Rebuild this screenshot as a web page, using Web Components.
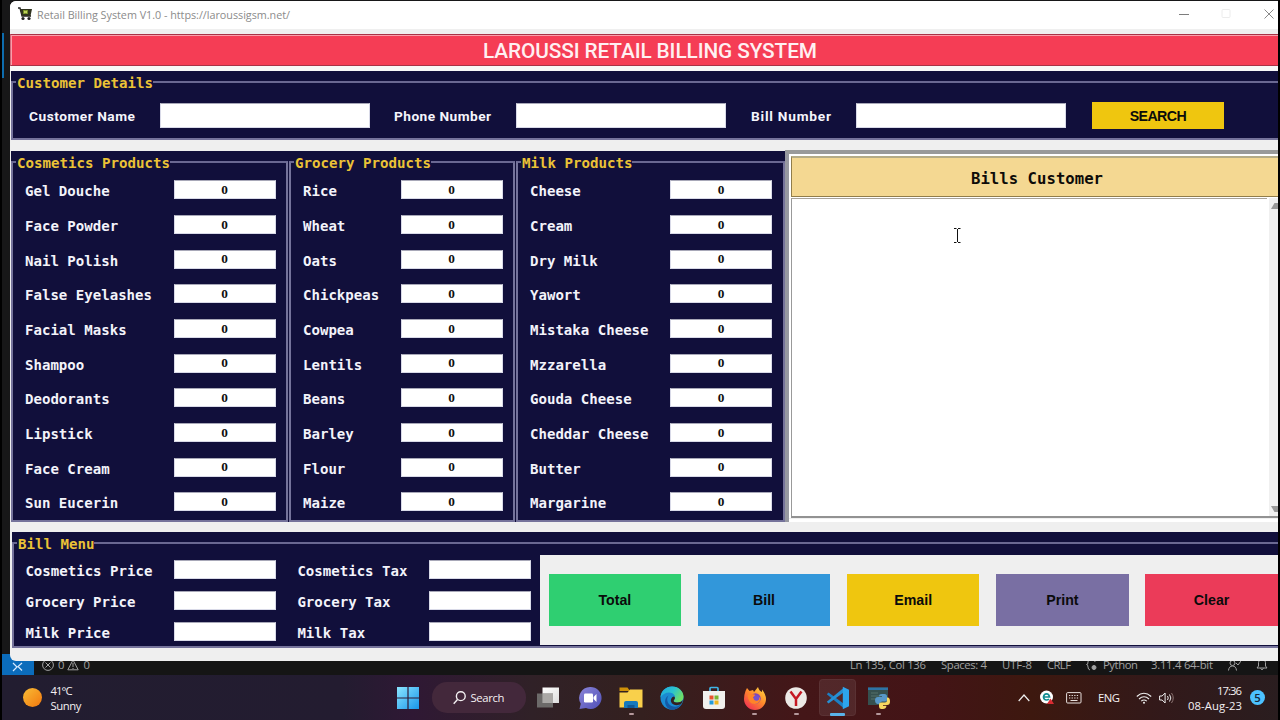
<!DOCTYPE html>
<html lang="en">
<head>
<meta charset="utf-8">
<title>Retail Billing System V1.0</title>
<style>
body {
    margin: 0;
    width: 1280px;
    height: 720px;
    overflow: hidden;
    background: #000;
}
</style>
</head>
<body>
<desktop-screen></desktop-screen>

<script>
// Text spread over a fixed width by its letter spacing
class FitText extends HTMLElement {
    connectedCallback() {
        const root = this.attachShadow({ mode: 'open' });
        root.innerHTML = `
<style>
:host { display: block; flex: none; white-space: nowrap; }
span { display: inline-block; }
</style>
<span><slot></slot></span>`;
        const span = root.querySelector('span');
        const width = Number(this.getAttribute('width'));
        this.style.width = width + 'px';
        const natural = span.getBoundingClientRect().width;
        const count = this.textContent.length;
        span.style.letterSpacing = (width - natural) / (count - 1) + 'px';
    }
}

class EntryBox extends HTMLElement {
    connectedCallback() {
        this.attachShadow({ mode: 'open' }).innerHTML = `
<style>
:host {
    display: flex;
    flex: none;
    box-sizing: border-box;
    width: 102px;
    height: 19px;
    align-items: center;
    justify-content: center;
    background: #fff;
    border: 1px solid #d9dae8;
    border-top-color: #a8a8b8;
    color: #101010;
    font: bold 13.3px "Liberation Serif", serif;
}
</style>
<slot></slot>`;
    }
}

class FlatButton extends HTMLElement {
    connectedCallback() {
        this.attachShadow({ mode: 'open' }).innerHTML = `
<style>
:host {
    display: flex;
    flex: none;
    align-items: center;
    justify-content: center;
    width: 132.3px;
    height: 52px;
    color: #0b0b0b;
    font: bold 14.2px "Liberation Sans", sans-serif;
}
</style>
<slot></slot>`;
    }
}

class LabelFrame extends HTMLElement {
    connectedCallback() {
        this.attachShadow({ mode: 'open' }).innerHTML = `
<style>
:host {
    display: flex;
    flex: none;
    box-sizing: border-box;
    background: #110f3b;
}
fieldset {
    flex: 1;
    box-sizing: border-box;
    min-width: 0;
    margin: 0;
    padding: 0;
    border: 2px solid #75739b;
    border-top-color: #6a6892;
}
legend {
    margin-left: 3px;
    padding: 0 0 0 1px;
    height: 22px;
    color: #ebc236;
    font: bold 14.12px/24px "DejaVu Sans Mono", monospace;
}
</style>
<fieldset><legend>${this.getAttribute('caption')}</legend><slot></slot></fieldset>`;
    }
}

class ProductList extends HTMLElement {
    connectedCallback() {
        const rows = this.getAttribute('items').split(',').map(name =>
            `<div class="row"><span>${name}</span><entry-box>0</entry-box></div>`).join('');
        this.attachShadow({ mode: 'open' }).innerHTML = `
<style>
:host {
    display: grid;
    grid-auto-rows: 34.67px;
    padding: 0 10.5px 0 12px;
}
.row { display: flex; align-items: center; justify-content: space-between; }
span {
    color: #f3f3fa;
    font: bold 14.07px/20px "DejaVu Sans Mono", monospace;
    margin-top: 3px;
    white-space: nowrap;
}
</style>
${rows}`;
    }
}

class TitleBar extends HTMLElement {
    connectedCallback() {
        this.attachShadow({ mode: 'open' }).innerHTML = `
<style>
:host {
    display: flex;
    flex: none;
    align-items: center;
    box-sizing: border-box;
    height: 28px;
    padding: 0 0 2px 8px;
    background: #fff;
    color: #8b8b8b;
    font: 10.8px "Open Sans", sans-serif;
}
.controls { margin: 0 4px 0 auto; display: flex; }
fit-text { margin-left: 5px; }
</style>
<svg width="14" height="14" viewBox="0 0 14 14"><path d="M0 1h2l2 8h9" fill="none" stroke="#222" stroke-width="1.3"/><path d="M2 2h12l-1.5 7H4z" fill="#30331f"/><path d="M5 3h5v4H5z" fill="#718c25"/><path d="m6 4 3 2m0-2L6 6" stroke="#d5e36a"/><circle cx="5" cy="11.5" r="1.6" fill="#222"/><circle cx="11" cy="11.5" r="1.6" fill="#222"/></svg>
<fit-text width="253">Retail Billing System V1.0 - https://laroussigsm.net/</fit-text>
<svg class="controls" width="96" height="12" viewBox="0 0 96 12" fill="none"><path d="M1 6.5h10" stroke="#7d7d7d"/><rect x="44" y="1.5" width="8" height="8" rx="1" stroke="#ececec"/><path d="m86.500 1.500 9 9m0-9-9 9" stroke="#8a8a8a"/></svg>`;
    }
}

class BillsPanel extends HTMLElement {
    connectedCallback() {
        this.attachShadow({ mode: 'open' }).innerHTML = `
<style>
:host {
    display: flex;
    flex: none;
    flex-direction: column;
    box-sizing: border-box;
    width: 494px;
    height: 372px;
    margin-top: -1px;
    padding: 2px 0 0 2.5px;
    background: #fff;
    border-left: 4px solid #9799a1;
    border-top: 4px solid #999a9a;
}
h2 {
    box-sizing: border-box;
    height: 41px;
    margin: 0;
    border: 1px solid #917d4a;
    border-top: 2px solid #b5ac86;
    border-right: 0;
    background: #f4d892;
    color: #0d0b08;
    font: bold 15.6px/43px "DejaVu Sans Mono", monospace;
    padding-left: 179px;
}
.area { display: flex; flex: 1; margin-top: 1px; border-bottom: 2px solid #929292; }
.text { flex: 1; border-top: 1px solid #a8a39a; border-left: 1px solid #999; }
.scroll {
    display: flex;
    flex-direction: column;
    justify-content: space-between;
    width: 10px;
    margin-left: 2px;
    padding: 5px 0 4px;
    box-sizing: border-box;
    background: #f0f0f0;
}
svg { margin-left: 2px; }
footer { height: 4px; background: linear-gradient(#f0f0f0 1px, #fff 1px); margin-left: -2px; }
</style>
<h2><fit-text width="132">Bills Customer</fit-text></h2>
<div class="area">
    <div class="text"></div>
    <div class="scroll">
        <svg width="7" height="6"><path d="M0 6 3.500 0H7v6z" fill="#999"/></svg>
        <svg width="7" height="6"><path d="M0 0 3.500 6H7V0z" fill="#999"/></svg>
    </div>
</div>
<footer></footer>`;
    }
}

class BillMenu extends HTMLElement {
    connectedCallback() {
        const rows = ['Cosmetics', 'Grocery', 'Milk'].map(name =>
            `<span>${name} Price</span><entry-box></entry-box><span>${name} Tax</span><entry-box></entry-box>`).join('');
        this.attachShadow({ mode: 'open' }).innerHTML = `
<style>
:host { display: flex; }
.prices {
    display: grid;
    grid-template-columns: 148.500px 123.500px 131.500px 111.500px;
    grid-auto-rows: 31px;
    align-items: center;
    padding-left: 11.400px;
    width: 515.200px;
}
span {
    color: #f3f3fa;
    font: bold 14.07px/20px "DejaVu Sans Mono", monospace;
    margin-top: 2px;
    white-space: nowrap;
}
.buttons {
    display: flex;
    align-items: center;
    gap: 16.9px;
    box-sizing: border-box;
    width: 780px;
    height: 90px;
    margin-top: 1px;
    padding-left: 8.300px;
    background: #efefef;
}
</style>
<div class="prices">${rows}</div>
<div class="buttons">
    <flat-button style="background:#2fcf71">Total</flat-button>
    <flat-button style="background:#3297da">Bill</flat-button>
    <flat-button style="background:#efc60f">Email</flat-button>
    <flat-button style="background:#796fa3">Print</flat-button>
    <flat-button style="background:#eb3b59">Clear</flat-button>
</div>`;
    }
}

class BillingWindow extends HTMLElement {
    connectedCallback() {
        this.attachShadow({ mode: 'open' }).innerHTML = `
<style>
:host {
    display: flex;
    flex-direction: column;
    width: 1268px;
    height: 661px;
    overflow: hidden;
    border-radius: 6px 0 0 6px;
    background: #efefef;
}
h1 {
    display: flex;
    flex: none;
    align-items: center;
    box-sizing: border-box;
    height: 32px;
    margin: 5px 0;
    padding: 3px 0 0 472px;
    border: 1px solid #a83246;
    border-right: 0;
    border-left-color: #d06a7c;
    box-shadow: inset 1px 1px #f9a0ab, 0 5px #f8f8f8;
    background: #f53d55;
    color: #fff0f2;
    font: 500 20.800px/27px Roboto, sans-serif;
}
.customer { width: 1300px; height: 69px; margin-left: 1px; }
.fields {
    display: flex;
    align-items: center;
    margin-left: 16px;
    height: 27px;
    margin-top: 9px;
    color: #f5f5fb;
    font: bold 13.7px Roboto, sans-serif;
}
.fields entry-box { width: 210px; height: 25px; }
.products { display: flex; flex: none; height: 371px; margin: 11px 0 10px 1px; }
.menu { width: 1300px; height: 116px; margin-left: 2px; }
product-list { margin-top: -.4px; }
</style>
<title-bar></title-bar>
<h1><fit-text width="334">LAROUSSI RETAIL BILLING SYSTEM</fit-text></h1>
<label-frame class="customer" caption="Customer Details">
    <div class="fields">
        <fit-text width="106">Customer Name</fit-text>
        <entry-box style="margin:0 24.500px"></entry-box>
        <fit-text width="97">Phone Number</fit-text>
        <entry-box style="margin:0 25px"></entry-box>
        <fit-text width="80">Bill Number</fit-text>
        <entry-box style="margin:0 26px 0 25px"></entry-box>
        <flat-button style="background:#efc60f;height:26.500px"><fit-text width="57">SEARCH</fit-text></flat-button>
    </div>
</label-frame>
<div class="products">
    <label-frame style="width:277px" caption="Cosmetics Products">
        <product-list items="Gel Douche,Face Powder,Nail Polish,False Eyelashes,Facial Masks,Shampoo,Deodorants,Lipstick,Face Cream,Sun Eucerin"></product-list>
    </label-frame>
    <label-frame style="width:227px;padding-left:1px" caption="Grocery Products">
        <product-list items="Rice,Wheat,Oats,Chickpeas,Cowpea,Lentils,Beans,Barley,Flour,Maize"></product-list>
    </label-frame>
    <label-frame style="width:269.500px;padding-left:1px" caption="Milk Products">
        <product-list items="Cheese,Cream,Dry Milk,Yawort,Mistaka Cheese,Mzzarella,Gouda Cheese,Cheddar Cheese,Butter,Margarine"></product-list>
    </label-frame>
    <bills-panel></bills-panel>
</div>
<label-frame class="menu" caption="Bill Menu"><bill-menu></bill-menu></label-frame>`;
    }
}

class StatusBar extends HTMLElement {
    connectedCallback() {
        this.attachShadow({ mode: 'open' }).innerHTML = `
<style>
:host {
    display: flex;
    align-items: center;
    height: 21px;
    color: #a2a2a2;
    background: #151515;
    font: 11.3px/21px "Open Sans", sans-serif;
}
.remote { width: 32px; height: 21px; background: #0b6cbb; }
.right { display: flex; align-items: center; gap: 15px; margin-left: auto; margin-right: 10px; }
svg { fill: none; stroke: #a2a2a2; flex: none; }
</style>
<svg class="remote" viewBox="0 0 32 21" style="stroke:#d6eaff"><path d="m11 9 4 4-4 4m9-8-4 3.500 4 4" stroke-width="1.2"/></svg>
<svg width="12" height="12" style="margin:0 4px 0 8px"><circle cx="6" cy="6" r="5.4"/><path d="m3.500 3.500 5 5m0-5-5 5"/></svg>
<span>0</span>
<svg width="12" height="12" style="margin:0 4px 0 3px"><path d="M6 1 .8 10.800h10.400zM6 4v4m0 1v1"/></svg>
<span>0</span>
<div class="right">
    <fit-text width="76">Ln 135, Col 136</fit-text>
    <fit-text width="46">Spaces: 4</fit-text>
    <fit-text width="30">UTF-8</fit-text>
    <fit-text width="24">CRLF</fit-text>
    <svg width="11" height="13" style="margin-right:-9px"><path d="M4 1Q2 1 2 4T.5 6.500Q2 6.500 2 9t2 3M7 1q2 0 2 3"/><circle cx="8" cy="9.500" r="2" fill="#a2a2a2"/></svg>
    <fit-text width="35">Python</fit-text>
    <fit-text width="62" style="margin-left:-2px">3.11.4 64-bit</fit-text>
    <svg width="13" height="12"><circle cx="4.500" cy="4" r="2.500"/><path d="M.5 11.500Q1 7 4.500 7t4 4.500M8 4l2 2 3-4"/></svg>
    <svg width="12" height="13"><path d="M1 10h10L9.500 8V4.500a3.500 3.500 0 0 0-7 0V8zM4.500 10.500q1.500 2.500 3 0"/></svg>
</div>`;
    }
}

class TaskbarIcon extends HTMLElement {
    connectedCallback() {
        this.attachShadow({ mode: 'open' }).innerHTML = `
<style>
:host {
    display: flex;
    flex: none;
    flex-direction: column;
    align-items: center;
    box-sizing: border-box;
    width: 37.3px;
    height: 37px;
    margin: 0 2px;
    padding-top: 7px;
    border-radius: 4px;
}
:host([active]) { background: #ffffff14; box-shadow: inset 0 0 0 1px #ffffff0c; }
i { width: 5px; height: 2px; margin-top: 3px; border-radius: 1px; }
:host([running]) i { background: #b5999c; }
:host([active]) i { width: 15px; height: 2.500px; background: #5ab3ea; }
</style>
<slot></slot><i></i>`;
    }
}

class TaskBar extends HTMLElement {
    connectedCallback() {
        this.attachShadow({ mode: 'open' }).innerHTML = `
<style>
:host {
    display: flex;
    height: 45px;
    align-items: center;
    color: #f4f0f2;
    background: linear-gradient(90deg, #221d30 0, #231c30 340px, #2f1834 410px, #302127 530px, #34201f 640px, #441618 800px, #431416 930px, #3d180f 1030px, #32191a 1160px, #2a1d1f 1276px);
    font: 11.3px/15px "Open Sans", sans-serif;
}
svg { display: block; flex: none; }
.sun { width: 19px; height: 19px; border-radius: 50%; margin: 0 9px 0 20.500px; background: linear-gradient(135deg, #f8bd36, #f2770e); }
.weather { width: 338px; margin-top: 1px; }
.weather div:last-child { color: #cbc7cf; }
.search {
    display: flex;
    align-items: center;
    box-sizing: border-box;
    width: 94px;
    height: 30.500px;
    margin: 0 2.300px 0 12.500px;
    padding-left: 21px;
    border-radius: 15px;
    background: #43283b;
}
.search fit-text { margin-left: 5px; }
.tray { display: flex; align-items: center; margin-left: auto; margin-right: 13px; }
.clock { display: flex; flex-direction: column; align-items: flex-end; width: 54px; margin: 0 8px 0 14.500px; }
.badge { width: 15px; height: 15px; border-radius: 50%; background: #4cc2ff; color: #15283a; text-align: center; font-weight: 600; }
</style>
<div class="sun"></div>
<div class="weather"><fit-text width="22">41°C</fit-text><fit-text width="31">Sunny</fit-text></div>
<svg width="22" height="22" style="margin-left:8.500px"><defs><linearGradient id="w" x2="1" y2="1"><stop stop-color="#8be5ff"/><stop offset="1" stop-color="#1895ea"/></linearGradient></defs><path d="M0 0h10.400v10.400H0zM11.600 0H22v10.400H11.600zM0 11.600h10.400V22H0zM11.600 11.600H22V22H11.600z" fill="url(#w)"/></svg>
<div class="search">
    <svg width="13" height="14" fill="none" stroke="#f4f0f2" stroke-width="1.400"><circle cx="7.800" cy="5.200" r="4.400"/><path d="M4.500 8.500.7 12.800"/></svg>
    <fit-text width="34">Search</fit-text>
</div>
<task-icon><svg width="24" height="24" viewBox="0 0 24 24"><defs><linearGradient id="tv" x2="1" y2="1"><stop stop-color="#fff"/><stop offset="1" stop-color="#ddd"/></linearGradient></defs><path d="M6.500 1.500H23V17H6.500z" fill="url(#tv)"/><path d="M1 7.500h16v14H1z" fill="#737271" opacity=".9"/><path d="M6.500 7.500H17V17H6.500z" fill="#aaa8a6"/></svg></task-icon>
<task-icon><svg width="24" height="24" viewBox="0 0 24 24"><defs><linearGradient id="ch" x2="1" y2="1"><stop stop-color="#8a84d8"/><stop offset="1" stop-color="#5050b8"/></linearGradient></defs><path d="M12 1a11 11 0 1 1-4 21l-6.500 1 1.300-5.200A11 11 0 0 1 12 1z" fill="url(#ch)"/><rect x="6" y="7.500" width="9" height="9" rx="1.200" fill="#fff"/><path d="m15.500 11 3-3v8l-3-3z" fill="#fff"/></svg></task-icon>
<task-icon running><svg width="24" height="24" viewBox="0 0 24 24"><path d="M.5 1.500h8L11 5H.5z" fill="#cf9109"/><path d="M.5 6.500h8L11 3.500h12.500V21.500H.5z" fill="#f9d04b"/><path d="M5 22v-5q0-2 2-2h10q2 0 2 2v5z" fill="#1679bc"/><path d="M8.500 22v-3h7v3z" fill="#0f5794"/></svg></task-icon>
<task-icon><svg width="24" height="24" viewBox="0 0 24 24"><defs><linearGradient id="eg" x2="1" y2=".5"><stop stop-color="#1fa8e3"/><stop offset=".55" stop-color="#2bc3ce"/><stop offset="1" stop-color="#6ede66"/></linearGradient></defs><circle cx="12" cy="12" r="11.500" fill="#1b8bd2"/><path d="M.5 11.500C1 4.500 6 .5 12 .5c7 0 11.500 5 11.500 10 0 4-3 6-6.500 6-3 0-4-1.500-3-2.500 3-4-1-7.500-5-7.500-3.500 0-7 2-8.500 5z" fill="url(#eg)"/><path d="M8.500 9.500c-3 4-.5 10 5 11 3 .5 6-.5 8-3-2 5-6.500 6.500-10.500 6C5 22.500 2.500 13 8.500 9.500z" fill="#145aa5"/><path d="M14 14c-1 1 0 2.500 3 2.500 2.500 0 4.700-.8 5.800-2.500-.3 2-1 3-1.800 4-3 2-9 1.500-10-2.500-.5-2 1-5 3-5 1.500 1 1 2.500 0 3.500z" fill="#34201f"/></svg></task-icon>
<task-icon><svg width="24" height="24" viewBox="0 0 24 24"><path d="M8 6V2.500q0-1 1-1h6q1 0 1 1V6" fill="none" stroke="#3fb5e7" stroke-width="1.700"/><path d="M1 5h22v15q0 3-3 3H4q-3 0-3-3z" fill="#f1f0ed"/><path d="M7.500 9.500h4v4h-4z" fill="#e7532e"/><path d="M12.500 9.500h4v4h-4z" fill="#78b532"/><path d="M7.500 14.500h4v4h-4z" fill="#259bd9"/><path d="M12.500 14.500h4v4h-4z" fill="#efb51f"/></svg></task-icon>
<task-icon running><svg width="24" height="24" viewBox="0 0 24 24"><defs><linearGradient id="ff" x1="1" x2=".2" y2="1"><stop stop-color="#ffe044"/><stop offset=".5" stop-color="#ff8a2b"/><stop offset="1" stop-color="#f02e55"/></linearGradient></defs><path d="M2.500 5 4 2l2.500 3 3.500-1 1 2 4-5q1 4 4 5V3.500q4 5 4 9.500a11 11 0 0 1-22 0q0-4 1.500-8z" fill="url(#ff)"/><circle cx="12.500" cy="12.500" r="5.200" fill="#7e45b8"/><path d="M4.500 9q4-2 8 0l-2.500 2.500q3 4 7-.5 1 7-5.500 7-6 0-7-9z" fill="#ff8428"/><circle cx="13.500" cy="12" r="2.800" fill="#7652cb"/></svg></task-icon>
<task-icon running><svg width="24" height="24" viewBox="0 0 24 24"><circle cx="12" cy="12" r="10.800" fill="#ece9e6"/><path d="m6.500 5.500 5.500 7.500 5.500-7.500M12 12.500V20" fill="none" stroke="#c41824" stroke-width="2.500"/></svg></task-icon>
<task-icon active running><svg width="24" height="24" viewBox="0 0 24 24"><path d="m2.500 6.500 15 11V22L.8 8.200z" fill="#1c7fc4"/><path d="m2.500 17.500 15-11V2L.8 15.800z" fill="#2790d3"/><path d="m16.800.8 6.200 3v16.400l-6.200 3z" fill="#2da5ed"/></svg></task-icon>
<task-icon running><svg width="24" height="24" viewBox="0 0 24 24"><path d="M1 1.500h20V19H1z" fill="#36504f"/><path d="M1 1.500h20V4H1z" fill="#2e73a5"/><path d="M4 7h7m-7 3h9m-9 3h4" stroke="#55716a"/><path d="M15 8h2.500q2.500 0 2.500 2.500V14q0 1.500-2 1.500h-3q-2 0-2 2.500h-2.500q-2.500-.5-2.500-4 0-3 3-3h4v-.7h-3Q12 8 15 8z" fill="#5797c8"/><path d="M16 23h-2q-2-.5-2-2.500v-2.300q0-1.700 2-1.700h4q2 0 2-2V11.500h1q2 .5 2 4t-3 3.500h-4v.8h3.500Q19 23 16 23z" fill="#f7d861"/></svg></task-icon>
<div class="tray">
    <svg width="12" height="8" fill="none" stroke="#eee"><path d="m.7 7 5.300-6 5.300 6" stroke-width="1.200"/></svg>
    <svg width="14" height="15" style="margin:0 12px 0 10px"><circle cx="6.500" cy="7" r="6.500" fill="#fff"/><path d="M3.500 7h6Q9 3.800 6.500 3.800T3.500 7q.3 3 3 3 1.500 0 2.500-1" fill="none" stroke="#128c91" stroke-width="1.700"/><path d="m10.500 8.500 3.500 5.500H7z" fill="#d92b32"/></svg>
    <svg width="16" height="12" fill="none" stroke="#e8dfdd"><rect x=".6" y=".6" width="14.400" height="10.400" rx="1"/><path d="M3 3.500h10M3 6h10" stroke-dasharray="1.300 1.300"/><path d="M4.500 8.500h7"/></svg>
    <fit-text width="22" style="margin-left:16.500px">ENG</fit-text>
    <svg width="16" height="12" style="margin:0 7px 0 15.500px" fill="none" stroke="#eee" stroke-width="1.100"><path d="M.8 4.500q7-6.500 14.400 0M3 7q5-4.500 10 0M5.200 9.200q2.800-2.500 5.600 0"/><circle cx="8" cy="10.700" r="1" fill="#eee" stroke="none"/></svg>
    <svg width="15" height="12" fill="none" stroke="#eee"><path d="M.6 4v4h2.500l3 3V1l-3 3zM8.500 4q1.500 2 0 4M10.500 2.500q2.700 3.500 0 7"/><path d="M12.500 1q3.500 5 0 10" stroke="#8b7472"/></svg>
    <div class="clock"><fit-text width="25">17:36</fit-text><fit-text width="54">08-Aug-23</fit-text></div>
    <div class="badge">5</div>
</div>`;
    }
}

class DesktopScreen extends HTMLElement {
    connectedCallback() {
        this.attachShadow({ mode: 'open' }).innerHTML = `
<style>
:host {
    display: flex;
    flex-direction: column;
    position: relative;
    box-sizing: border-box;
    width: 1280px;
    height: 720px;
    padding: 0 2px;
    background: #000;
}
.editor { height: 654px; background: #171718; display: flex; }
.editor i { width: 2px; height: 45px; margin-top: 33px; background: #0d6cae; }
billing-window { position: absolute; left: 10px; top: 1px; height: 660px; }
.pointer { position: absolute; left: 953px; top: 228px; }
</style>
<div class="editor"><i></i></div>
<status-bar></status-bar>
<task-bar></task-bar>
<billing-window></billing-window>
<svg class="pointer" width="8" height="15" fill="none" stroke="#111"><path d="M1 .5h2.500m1.500 0h2.500M1 14.500h2.500m1.500 0h2.500M4.500 1v13"/></svg>`;
    }
}

customElements.define('entry-box', EntryBox);
customElements.define('flat-button', FlatButton);
customElements.define('label-frame', LabelFrame);
customElements.define('product-list', ProductList);
customElements.define('title-bar', TitleBar);
customElements.define('bills-panel', BillsPanel);
customElements.define('bill-menu', BillMenu);
customElements.define('billing-window', BillingWindow);
customElements.define('status-bar', StatusBar);
customElements.define('task-icon', TaskbarIcon);
customElements.define('task-bar', TaskBar);
customElements.define('desktop-screen', DesktopScreen);
// Last, so that every text is laid out when it is measured
customElements.define('fit-text', FitText);
</script>
</body>
</html>
